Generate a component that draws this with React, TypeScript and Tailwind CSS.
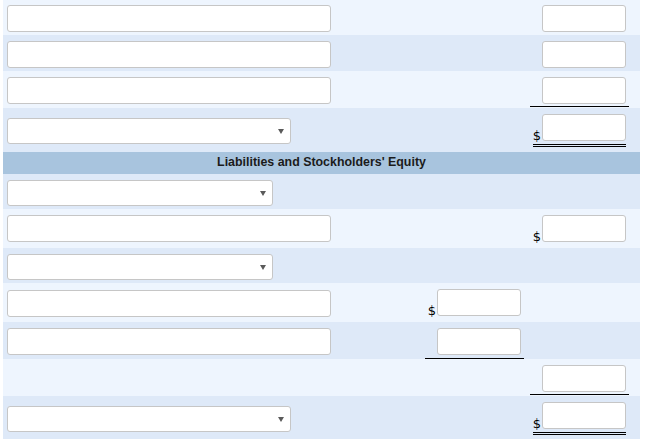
import React from 'react';

type Cell =
  | { kind: 'input'; w: number }
  | { kind: 'select'; w: number }
  | { kind: 'none' };

interface Row {
  h: number;
  tone: 'light' | 'dark';
  left: Cell;
  leftPt: number;
  mid?: { dollar?: boolean; underline?: boolean; pt: number };
  right?: { dollar?: boolean; underline?: 'single' | 'double'; pt: number };
}

const TextBox = ({ w }: { w: number }) => (
  <div
    className="h-[27px] shrink-0 rounded-[3px] border border-[#c6c6c6] bg-white"
    style={{ width: w }}
  />
);

const SelectBox = ({ w }: { w: number }) => (
  <div
    className="flex h-[26px] items-center justify-end rounded-[3px] border border-[#c6c6c6] bg-white pr-[6px]"
    style={{ width: w }}
  >
    <svg width="6" height="5" viewBox="0 0 6 5">
      <polygon points="0,0 6,0 3,5" fill="#5a5a5a" />
    </svg>
  </div>
);

const Dollar = () => (
  <span className="mr-[1px] text-[13px] leading-[11px] text-black font-['DejaVu_Sans',sans-serif]">$</span>
);

const rows: Row[] = [
  { h: 35, tone: 'light', left: { kind: 'input', w: 324 }, leftPt: 5, right: { pt: 5 } },
  { h: 36, tone: 'dark', left: { kind: 'input', w: 324 }, leftPt: 6, right: { pt: 6 } },
  { h: 37, tone: 'light', left: { kind: 'input', w: 324 }, leftPt: 6, right: { pt: 6, underline: 'single' } },
  { h: 44, tone: 'dark', left: { kind: 'select', w: 284 }, leftPt: 10, right: { pt: 6, dollar: true, underline: 'double' } },
];

const rows2: Row[] = [
  { h: 35, tone: 'dark', left: { kind: 'select', w: 266 }, leftPt: 6 },
  { h: 39, tone: 'light', left: { kind: 'input', w: 324 }, leftPt: 6, right: { pt: 6, dollar: true } },
  { h: 35, tone: 'dark', left: { kind: 'select', w: 266 }, leftPt: 6 },
  { h: 39, tone: 'light', left: { kind: 'input', w: 324 }, leftPt: 7, mid: { pt: 6, dollar: true } },
  { h: 37, tone: 'dark', left: { kind: 'input', w: 324 }, leftPt: 6, mid: { pt: 6, underline: true } },
  { h: 37, tone: 'light', left: { kind: 'none' }, leftPt: 6, right: { pt: 6, underline: 'single' } },
  { h: 43, tone: 'dark', left: { kind: 'select', w: 284 }, leftPt: 10, right: { pt: 6, dollar: true, underline: 'double' } },
];

const TableRow = ({ row }: { row: Row }) => {
  const bg = row.tone === 'light' ? 'bg-[#eef5fe]' : 'bg-[#dee9f8]';
  return (
    <div className={`flex ${bg}`} style={{ height: row.h }}>
      {/* 左の列 */}
      <div className="w-[419px] pl-[4px]" style={{ paddingTop: row.leftPt }}>
        {row.left.kind === 'input' && <TextBox w={row.left.w} />}
        {row.left.kind === 'select' && <SelectBox w={row.left.w} />}
      </div>

      {/* 中央の列 */}
      <div className="w-[105px] pl-[3px]" style={{ paddingTop: row.mid?.pt ?? 0 }}>
        {row.mid && (
          <div
            className={`flex w-[99px] items-end justify-end pr-[3px] ${
              row.mid.underline ? 'border-b border-black pb-[3px]' : ''
            }`}
          >
            {row.mid.dollar && <Dollar />}
            <TextBox w={84} />
          </div>
        )}
      </div>

      {/* 右の列 */}
      <div className="w-[113px] pl-[3px]" style={{ paddingTop: row.right?.pt ?? 0 }}>
        {row.right && row.right.underline === 'double' && (
          <div className="ml-[3px] flex w-[93px] items-end justify-end border-b-[3px] border-double border-black pb-[3px]">
            {row.right.dollar && <Dollar />}
            <TextBox w={84} />
          </div>
        )}
        {row.right && row.right.underline !== 'double' && (
          <div
            className={`flex w-[99px] items-end justify-end pr-[3px] ${
              row.right.underline === 'single' ? 'border-b border-black pb-[2px]' : ''
            }`}
          >
            {row.right.dollar && <Dollar />}
            <TextBox w={84} />
          </div>
        )}
      </div>
    </div>
  );
};

export default function App() {
  return (
    <div className="min-h-[444px] bg-white">
      <div className="ml-[3px] w-[637px]">
        {rows.map((r, i) => (
          <TableRow key={i} row={r} />
        ))}
        <div className="flex h-[22px] items-center justify-center bg-[#a8c4de] pb-[1px] text-[12.4px] font-bold text-[#1b1b1b] font-['Liberation_Sans',sans-serif]">
          Liabilities and Stockholders&apos; Equity
        </div>
        {rows2.map((r, i) => (
          <TableRow key={i} row={r} />
        ))}
      </div>
    </div>
  );
}
